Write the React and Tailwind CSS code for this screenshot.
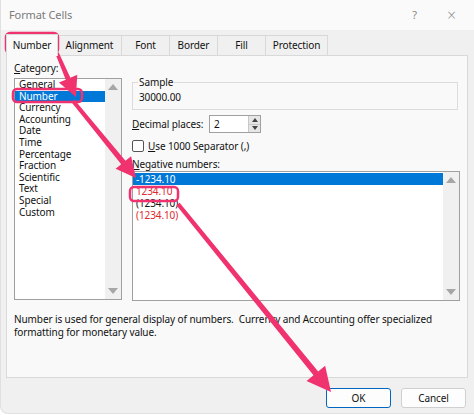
const categories = ["General", "Number", "Currency", "Accounting", "Date", "Time", "Percentage", "Fraction", "Scientific", "Text", "Special", "Custom"];

const negatives = [
  { text: "-1234.10", selected: true },
  { text: "1234.10", red: true },
  { text: "(1234.10)" },
  { text: "(1234.10)", red: true },
];

const tabs = [
  { name: "Number", w: "w-[52px]" },
  { name: "Alignment", w: "w-[64px]" },
  { name: "Font", w: "w-[48px]" },
  { name: "Border", w: "w-[48px]" },
  { name: "Fill", w: "w-[48px]" },
  { name: "Protection", w: "w-[62px]" },
];

// arrow polygon from (x1,y1) to tip (x2,y2)
function arrowPoints(x1, y1, x2, y2, shaft = 4.5, headLen = 22, headW = 22) {
  const dx = x2 - x1;
  const dy = y2 - y1;
  const len = Math.hypot(dx, dy);
  const ux = dx / len;
  const uy = dy / len;
  const px = -uy;
  const py = ux;
  const bx = x2 - ux * headLen;
  const by = y2 - uy * headLen;
  const pts = [
    [x1 + px * shaft * 0.35, y1 + py * shaft * 0.35],
    [bx + px * shaft / 2, by + py * shaft / 2],
    [bx + px * headW / 2, by + py * headW / 2],
    [x2, y2],
    [bx - px * headW / 2, by - py * headW / 2],
    [bx - px * shaft / 2, by - py * shaft / 2],
    [x1 - px * shaft * 0.35, y1 - py * shaft * 0.35],
  ];
  return pts.map((p) => p.join(",")).join(" ");
}

const ScrollBar = () => (
  <div className="w-[16px] bg-[#f0f0f0] flex flex-col justify-between items-center py-[5px]">
    <span className="w-0 h-0 border-l-[5px] border-r-[5px] border-b-[6px] border-l-transparent border-r-transparent border-b-[#a6a6a6]"></span>
    <span className="w-0 h-0 border-l-[5px] border-r-[5px] border-t-[6px] border-l-transparent border-r-transparent border-t-[#a6a6a6]"></span>
  </div>
);

export default function App() {
  return (
    <div className="relative w-[474px] h-[415px] overflow-hidden bg-white">
      <div className="w-[474px] h-[414px] bg-[#f0f0f0] border-l border-b border-[#e0e0e0] rounded-bl-[8px] text-[10px] tracking-[-0.1px] text-[#111] font-['Noto_Sans',sans-serif]">
        {/* title bar */}
        <div className="h-[30px] bg-[#fafafa] flex items-center pl-[8px] pr-[18px]">
          <span className="text-[11px] text-[#7a7a7a]">Format Cells</span>
          <span className="ml-auto text-[11px] text-[#888]">?</span>
          <span className="ml-[30px] text-[16px] leading-none text-[#999] font-light">×</span>
        </div>

        {/* tabs */}
        <div className="flex items-end h-[25px] pl-[5px] pt-[3px]">
          {tabs.map((t, i) =>
            i === 0 ? (
              <div key={t.name} className={`${t.w} h-[22px] bg-[#f9f9f9] border border-b-0 border-[#d9d9d9] flex items-center justify-center relative z-10 -mb-px`}>
                {t.name}
              </div>
            ) : (
              <div key={t.name} className={`${t.w} h-[20px] border-t border-r border-[#d9d9d9] bg-[#f0f0f0] flex items-center justify-center`}>
                {t.name}
              </div>
            )
          )}
        </div>

        {/* panel */}
        <div className="ml-[5px] mr-[6px] h-[323px] bg-[#f9f9f9] border border-[#d9d9d9] px-[7px] pt-[4px] flex flex-col">
          <div className="flex gap-[10px]">
            {/* category column */}
            <div className="w-[108px] flex flex-col">
              <div className="h-[18px] leading-[16px]"><span className="underline">C</span>ategory:</div>
              <div className="h-[222px] border border-[#a0a0a0] bg-white flex">
                <div className="flex-1">
                  {categories.map((c) => (
                    <div
                      key={c}
                      className={`h-[11.6px] leading-[11.6px] pl-[4px] ${c === "Number" ? "bg-[#0078d7] text-white" : ""}`}
                    >
                      {c}
                    </div>
                  ))}
                </div>
                <ScrollBar />
              </div>
            </div>

            {/* right column */}
            <div className="w-[328px] flex flex-col">
              <fieldset className="mt-[17px] h-[33px] border border-[#dcdcdc] pl-[6px] mr-[2px]">
                <legend className="px-[1px] leading-[10px] -ml-px">Sample</legend>
                <div className="leading-[14px] mt-[3px]">30000.00</div>
              </fieldset>

              <div className="flex items-center mt-[5px] h-[18px]">
                <span className="w-[77px]"><span className="underline">D</span>ecimal places:</span>
                <div className="w-[52px] h-[18px] border border-[#a0a0a0] bg-white flex">
                  <span className="flex-1 pl-[4px] leading-[16px]">2</span>
                  <div className="w-[12px] flex flex-col bg-[#e6e6e6] border-l border-[#c8c8c8]">
                    <div className="flex-1 flex items-center justify-center border-b border-[#c8c8c8]">
                      <span className="w-0 h-0 border-l-[3px] border-r-[3px] border-b-[4px] border-l-transparent border-r-transparent border-b-[#444]"></span>
                    </div>
                    <div className="flex-1 flex items-center justify-center">
                      <span className="w-0 h-0 border-l-[3px] border-r-[3px] border-t-[4px] border-l-transparent border-r-transparent border-t-[#444]"></span>
                    </div>
                  </div>
                </div>
              </div>

              <div className="flex items-center mt-[7px] h-[12px]">
                <span className="w-[12px] h-[12px] border border-[#555] rounded-[2px] bg-white"></span>
                <span className="ml-[4px]"><span className="underline">U</span>se 1000 Separator (<span className="underline">,</span>)</span>
              </div>

              <div className="mt-[5px] h-[14px] leading-[14px]"><span className="underline">N</span>egative numbers:</div>

              <div className="mt-[0px] h-[130px] border border-[#a0a0a0] bg-white flex">
                <div className="flex-1 pt-[1px]">
                  {negatives.map((n, i) => (
                    <div
                      key={i}
                      className={`h-[12px] leading-[12px] pl-[3px] ${n.selected ? "bg-[#0078d7] text-white" : n.red ? "text-[#e0282d]" : ""}`}
                    >
                      {n.text}
                    </div>
                  ))}
                </div>
                <ScrollBar />
              </div>
            </div>
          </div>

          <p className="mt-[12px] leading-[13px]">
            Number is used for general display of numbers.&nbsp; Currency and Accounting offer specialized
            <br />
            formatting for monetary value.
          </p>
        </div>

        {/* buttons */}
        <div className="flex justify-end gap-[10px] pr-[8px] mt-[10px]">
          <button className="w-[65px] h-[20px] bg-[#fdfdfd] border border-[#0067c0] rounded-[3px] text-[10px]">OK</button>
          <button className="w-[65px] h-[20px] bg-[#fdfdfd] border border-[#d0d0d0] rounded-[3px] text-[10px]">Cancel</button>
        </div>
      </div>

      {/* annotations */}
      <svg className="absolute inset-0 pointer-events-none" width="474" height="415" viewBox="0 0 474 415">
        <g fill="none" stroke="#f0336f" strokeWidth="2.5">
          <rect x="6" y="33" width="52" height="20" rx="4" />
          <rect x="13" y="89" width="69" height="13" rx="4" />
          <rect x="130" y="187" width="48" height="14" rx="4" />
        </g>
        <g fill="#f0336f">
          <polygon points={arrowPoints(57, 53, 76, 97, 5, 20, 20)} />
          <polygon points={arrowPoints(73, 101, 136, 178, 5.5, 20, 20)} />
          <polygon points={arrowPoints(178, 204, 331, 392, 6, 24, 24)} />
        </g>
      </svg>
    </div>
  );
}
